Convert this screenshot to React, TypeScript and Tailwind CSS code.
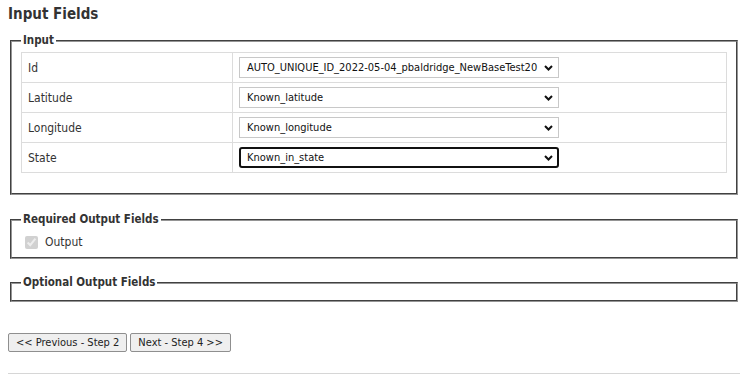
import React from "react";

const Chevron = () => (
  <svg className="pointer-events-none absolute right-[6px] top-1/2 -translate-y-1/2" width="9" height="6" viewBox="0 0 9 6">
    <path d="M1 1 L4.5 4.5 L8 1" fill="none" stroke="#111" strokeWidth="2" />
  </svg>
);

function Select({ value, focused }: { value: string; focused?: boolean }) {
  return (
    <div className="relative w-[320px]">
      <select
        defaultValue={value}
        className={
          focused
            ? "block h-[21px] w-full appearance-none rounded-[3px] border-2 border-[#111] bg-white pl-[6px] pr-[20px] text-[11px] leading-[17px] text-[#111] outline-none"
            : "block h-[21px] w-full appearance-none border border-[#c8c8c8] bg-white pl-[7px] pr-[20px] text-[11px] leading-[19px] text-[#111] outline-none"
        }
      >
        <option>{value}</option>
      </select>
      <Chevron />
    </div>
  );
}

const rows = [
  { label: "Id", value: "AUTO_UNIQUE_ID_2022-05-04_pbaldridge_NewBaseTest20" },
  { label: "Latitude", value: "Known_latitude" },
  { label: "Longitude", value: "Known_longitude" },
  { label: "State", value: "Known_in_state", focused: true },
];

export default function App() {
  return (
    <div className="bg-white px-2 pt-[4px] text-[12px] text-[#333] [font-family:'DejaVu_Sans_Condensed','DejaVu_Sans',sans-serif]">
      <h2 className="h-[20px] text-[15px] font-bold leading-[20px] text-[#333]">Input Fields</h2>
      <fieldset className="mx-[2px] mt-[9px] border-2 border-[#959595] px-[9px] pb-[20px] pt-[4px] [border-style:groove]">
        <legend className="px-[2px] text-[11.5px] font-bold leading-[15px]">Input</legend>
        <table className="w-full border-collapse">
          <tbody>
            {rows.map((r) => (
              <tr key={r.label} className="h-[30px]">
                <td className="w-[211px] border border-[#dcdcdc] pl-[6px] align-middle">{r.label}</td>
                <td className="border border-[#dcdcdc] pl-[6px] align-middle">
                  <Select value={r.value} focused={r.focused} />
                </td>
              </tr>
            ))}
          </tbody>
        </table>
      </fieldset>
      <fieldset className="mx-[2px] mt-[17px] border-2 border-[#959595] px-[9px] pb-[6px] pt-[6px] [border-style:groove]">
        <legend className="px-[2px] text-[11.5px] font-bold leading-[15px]">Required Output Fields</legend>
        <label className="flex items-center gap-[7px] pl-[4px] text-[#333]">
          <input type="checkbox" checked disabled readOnly className="m-0 h-[13px] w-[13px]" />
          <span>Output</span>
        </label>
      </fieldset>
      <fieldset className="mx-[2px] mt-[16px] border-2 border-[#959595] px-[9px] pb-[6px] pt-[4px] [border-style:groove]">
        <legend className="px-[2px] text-[11.5px] font-bold leading-[15px]">Optional Output Fields</legend>
      </fieldset>
      <div className="mt-[31px] flex gap-[3px]">
        <button className="h-[19px] rounded-[2px] border border-[#8f8f8f] bg-[#efefef] px-[7px] text-[11px] leading-[17px] text-[#222]">
          &lt;&lt; Previous - Step 2
        </button>
        <button className="h-[19px] rounded-[2px] border border-[#8f8f8f] bg-[#efefef] px-[7px] text-[11px] leading-[17px] text-[#222]">
          Next - Step 4 &gt;&gt;
        </button>
      </div>
      <hr className="mt-[21px] border-t border-[#d6d6d6]" />
    </div>
  );
}
